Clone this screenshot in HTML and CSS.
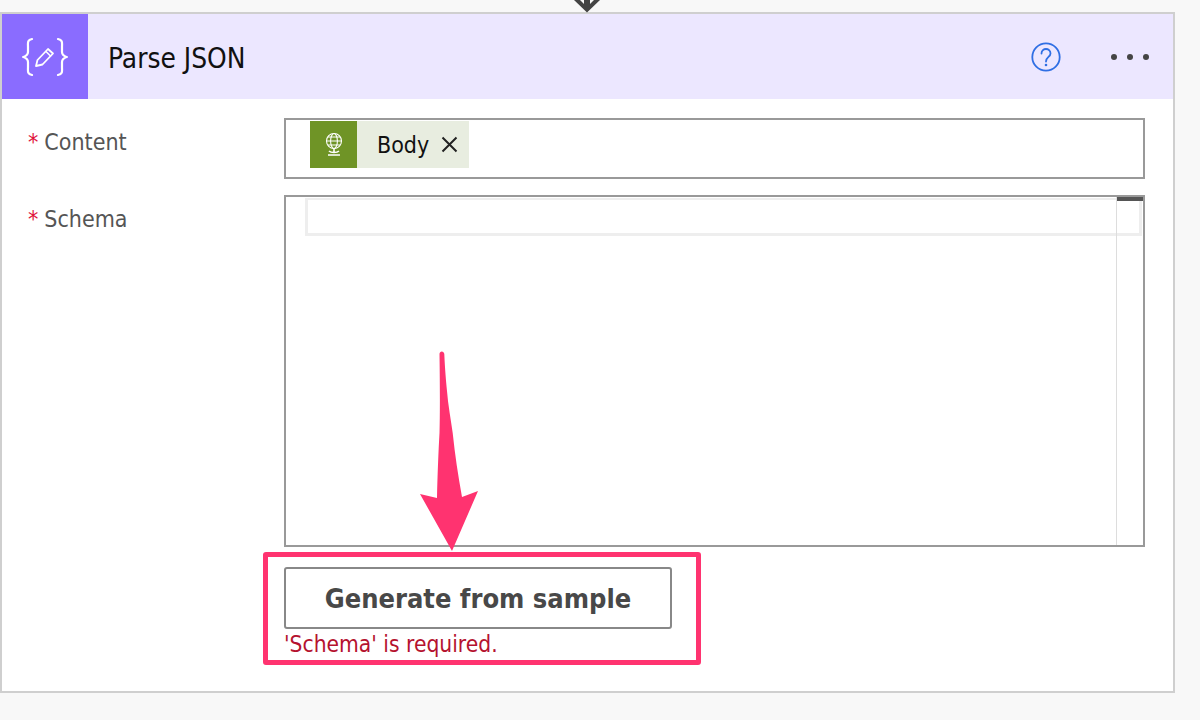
FILE: index.html
```html
<!DOCTYPE html>
<html lang="en">
<head>
    <meta charset="UTF-8">
    <meta name="viewport" content="width=device-width, initial-scale=1.0">
    <title>Parse JSON</title>
    <link rel="stylesheet" href="styles.css">
</head>
<body>
    <svg class="connector" width="30" height="13" viewBox="0 0 30 13">
        <path d="M2 0 L8 0 L12 4 L12 0 L18 0 L18 4 L22 0 L28 0 L15 12.5 Z" fill="#444"/>
    </svg>

    <div class="card">
        <div class="card-header">
            <div class="action-icon">
                <svg width="46" height="40" viewBox="0 0 46 40" fill="none" stroke="#fff" stroke-width="2.2" stroke-linecap="round">
                    <path d="M10 2 C5 3 6 6 6 10 L6 15 C6 18 4 19 1.5 20 C4 21 6 22 6 25 L6 30 C6 34 5 37 10 38"/>
                    <path d="M36 2 C41 3 40 6 40 10 L40 15 C40 18 42 19 44.5 20 C42 21 40 22 40 25 L40 30 C40 34 41 37 36 38"/>
                    <path d="M14 29 L15.5 23 L26 12 L31 16.5 L20.5 27.5 Z" stroke-width="1.8" stroke-linejoin="round"/>
                    <path d="M24 14.5 L28.5 19" stroke-width="1.6"/>
                </svg>
            </div>
            <div class="card-title">Parse JSON</div>
            <svg class="help-icon" width="30" height="30" viewBox="0 0 30 30" fill="none">
                <circle cx="15" cy="15" r="13.7" stroke="#2f6fe4" stroke-width="1.8"/>
                <path d="M10.5 11.5 C10.5 5.5 19.5 5.5 19.5 11.5 C19.5 15 15 15 15 19.5" stroke="#2f6fe4" stroke-width="1.8" stroke-linecap="round"/>
                <circle cx="15" cy="23" r="1.3" fill="#2f6fe4"/>
            </svg>
            <div class="more-dots"><span></span><span></span><span></span></div>
        </div>

        <div class="card-body">
            <div class="field-row">
                <label class="field-label"><span class="req">*</span>Content</label>
                <div class="text-input">
                    <div class="token">
                        <div class="token-icon">
                            <svg width="20" height="28" viewBox="0 0 20 28" fill="none" stroke="#fff" stroke-width="1.1">
                                <circle cx="10" cy="10" r="7.5"/>
                                <ellipse cx="10" cy="10" rx="3.4" ry="7.5"/>
                                <path d="M2.5 10 H17.5 M3.6 6 H16.4 M3.6 14 H16.4"/>
                                <path d="M10 17.5 V22 M5 20 C7 22 13 22 15 20 M4 24 H16" stroke-width="1.6"/>
                            </svg>
                        </div>
                        <span class="token-text">Body</span>
                        <svg class="token-x" width="17" height="17" viewBox="0 0 17 17" stroke="#222" stroke-width="2">
                            <path d="M1.5 1.5 L15.5 15.5 M15.5 1.5 L1.5 15.5"/>
                        </svg>
                    </div>
                </div>
            </div>

            <div class="field-row">
                <label class="field-label"><span class="req">*</span>Schema</label>
                <div class="field-stack">
                    <div class="code-editor">
                        <div class="current-line"></div>
                        <div class="scroll-line"></div>
                        <div class="scroll-mark"></div>
                    </div>
                    <button class="sample-btn">Generate from sample</button>
                    <div class="error-text">'Schema' is required.</div>
                </div>
            </div>
        </div>
    </div>

    <!-- annotation on top of the screenshot -->
    <div class="highlight-box"></div>
    <svg class="arrow" width="70" height="210" viewBox="0 0 70 210">
        <path d="M19.5 4 C19.5 0.5 24 0.5 24.3 4 C25 20 26 30 26.9 40 C28 55 31 70 32.7 83 C35 105 38 125 42 147 L58 141 L32 201 L0 144 L17 148 C17.5 125 18.5 100 19.5 83 C20 65 20 40 19.5 4 Z" fill="#ff3370"/>
    </svg>
</body>
</html>
```

FILE: styles.css
```css
html, body {
    margin: 0;
    padding: 0;
}
body {
    height: 720px;
    overflow: hidden;
    background-color: #f8f8f8;
    font-family: "DejaVu Sans", Arial, sans-serif;
    font-stretch: condensed;
    color: #111;
    position: relative;
    padding-top: 12px;
    box-sizing: border-box;
}
.connector {
    position: absolute;
    left: 572px;
    top: 0;
}
.card {
    width: 1175px;
    height: 681px;
    box-sizing: border-box;
    border: 2px solid #cfcfcf;
    background-color: #fff;
}
.card-header {
    display: flex;
    align-items: center;
    height: 85px;
    background-color: #ece7ff;
}
.action-icon {
    width: 86px;
    height: 85px;
    background-color: #8a6cff;
    display: flex;
    align-items: center;
    justify-content: center;
}
.card-title {
    flex: 1;
    margin-left: 20px;
    padding-top: 3px;
    font-size: 27.8px;
    color: #111;
}
.help-icon {
    margin-right: 50px;
}
.more-dots {
    display: flex;
    gap: 10px;
    margin-right: 24px;
}
.more-dots span {
    width: 6px;
    height: 6px;
    border-radius: 50%;
    background-color: #444;
}
.card-body {
    padding: 19px 28px 0 26px;
}
.field-row {
    display: flex;
    margin-bottom: 16px;
}
.field-label {
    width: 256px;
    padding-top: 9px;
    font-size: 23px;
    line-height: 30px;
    color: #555;
}
.req {
    color: #e0143c;
    margin-right: 6px;
}
.text-input {
    flex: 1;
    height: 61px;
    box-sizing: border-box;
    border: 2px solid #999;
    padding: 1px 24px;
}
.token {
    display: inline-flex;
    align-items: center;
    height: 47px;
    width: 159px;
    background-color: #e8ede0;
}
.token-icon {
    width: 47px;
    height: 47px;
    background-color: #6f9426;
    display: flex;
    align-items: center;
    justify-content: center;
}
.token-text {
    margin-left: 20px;
    font-size: 23px;
    color: #111;
}
.token-x {
    margin-left: 12px;
}
.field-stack {
    flex: 1;
}
.code-editor {
    position: relative;
    height: 352px;
    box-sizing: border-box;
    border: 2px solid #999;
}
.current-line {
    position: absolute;
    left: 19px;
    top: 1px;
    right: 1px;
    height: 38px;
    box-sizing: border-box;
    border: 3px solid #eeeeee;
    border-top-width: 2px;
}
.scroll-line {
    position: absolute;
    left: 830px;
    top: 0;
    bottom: 0;
    border-left: 1px solid #ddd;
}
.scroll-mark {
    position: absolute;
    left: 831px;
    top: 0;
    right: 0;
    height: 4px;
    background-color: #555;
}
.sample-btn {
    display: block;
    width: 388px;
    height: 62px;
    margin-top: 20px;
    border: 2px solid #888;
    border-radius: 3px;
    background-color: #fff;
    font-family: "DejaVu Sans", Arial, sans-serif;
    font-stretch: condensed;
    font-weight: 700;
    font-size: 27px;
    color: #484848;
}
.error-text {
    font-size: 22.6px;
    line-height: 30px;
    color: #b5122f;
}
.highlight-box {
    position: absolute;
    left: 263px;
    top: 552px;
    width: 438px;
    height: 113px;
    box-sizing: border-box;
    border: 5px solid #ff3370;
    border-radius: 3px;
}
.arrow {
    position: absolute;
    left: 420px;
    top: 350px;
}
```
